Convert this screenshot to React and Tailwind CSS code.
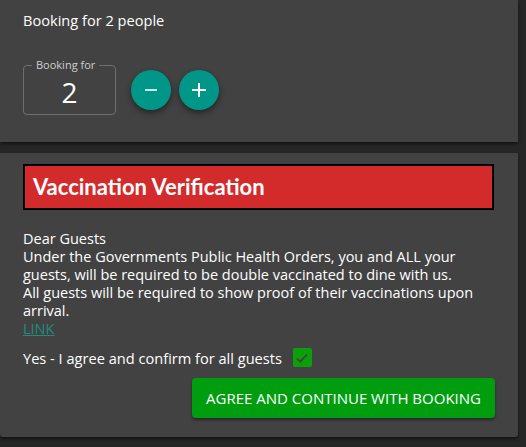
import React, { useState } from 'react';

const Stepper = ({ label, children, onClick }) => (
  <button
    onClick={onClick}
    aria-label={label}
    className="w-10 h-10 rounded-full bg-[#009688] text-white flex items-center justify-center shadow-[0_3px_6px_rgba(0,0,0,0.45)]"
  >
    {children}
  </button>
);

export default function App() {
  const [guests, setGuests] = useState(2);
  const [agreed, setAgreed] = useState(true);

  return (
    <div className="min-h-screen w-[526px] h-[447px] overflow-hidden bg-[#262626] font-['Open_Sans',sans-serif] text-white">
      {/* booking panel */}
      <div className="w-[518px] h-[142px] bg-[#424242] px-[23px] pt-[10px] shadow-[0_2px_3px_rgba(0,0,0,0.5)]">
        <h2 className="text-[14.6px] font-medium leading-[20px]">Booking for {guests} people</h2>
        <div className="flex items-center gap-[8px] mt-[35px]">
          <div className="relative w-[93px] h-[50px] rounded-[4px] border border-[#6e6e6e] flex items-center justify-center">
            <span className="absolute -top-[9px] left-[8px] px-[4px] bg-[#424242] text-[11px] leading-[16px] text-[#cfcfcf]">
              Booking for
            </span>
            <span className="text-[28px] leading-none mt-[4px]">{guests}</span>
          </div>
          <div className="flex gap-[8px] ml-[7px]">
            <Stepper label="decrease" onClick={() => setGuests(Math.max(1, guests - 1))}>
              <svg width="14" height="14" viewBox="0 0 14 14"><path d="M1 7h12" stroke="white" strokeWidth="1.6" /></svg>
            </Stepper>
            <Stepper label="increase" onClick={() => setGuests(guests + 1)}>
              <svg width="16" height="16" viewBox="0 0 16 16"><path d="M1 8h14M8 1v14" stroke="white" strokeWidth="2" /></svg>
            </Stepper>
          </div>
        </div>
      </div>

      {/* vaccination panel */}
      <div className="w-[518px] h-[284px] mt-[11px] bg-[#424242] rounded-b-[3px] px-[23px] pt-[11px] shadow-[0_2px_3px_rgba(0,0,0,0.5)]">
        <div className="w-[471px] h-[46px] bg-[#d32b2b] border-2 border-black flex items-center px-[8px]">
          <h1 className="font-['Lato',sans-serif] text-[22px] font-bold leading-none">Vaccination Verification</h1>
        </div>
        <div className="mt-[20px] text-[14.5px] leading-[18px]">
          <p>Dear Guests</p>
          <p>
            Under the Governments Public Health Orders, you and ALL your guests, will be required to be
            double vaccinated to dine with us.
          </p>
          <p>All guests will be required to show proof of their vaccinations upon arrival.</p>
          <a href="#" className="text-[#1e8c80] underline">LINK</a>
        </div>
        <label className="flex items-center gap-[11px] mt-[10px] text-[14.6px] leading-[18px]">
          <span>Yes - I agree and confirm for all guests</span>
          <button
            onClick={() => setAgreed(!agreed)}
            className={`w-[19px] h-[19px] rounded-[2px] flex items-center justify-center ${agreed ? 'bg-[#0aa00a]' : 'bg-transparent border border-gray-400'}`}
          >
            {agreed && (
              <svg width="14" height="14" viewBox="0 0 14 14">
                <path d="M2 7.5l3.2 3.2L12 3.5" fill="none" stroke="#424242" strokeWidth="1.8" />
              </svg>
            )}
          </button>
        </label>
        <div className="flex justify-end mt-[11px]">
          <button className="w-[303px] h-[40px] rounded-[4px] bg-[#009e0f] text-[15px] uppercase shadow-[0_2px_3px_rgba(0,0,0,0.4)]">
            Agree and continue with booking
          </button>
        </div>
      </div>
    </div>
  );
}
